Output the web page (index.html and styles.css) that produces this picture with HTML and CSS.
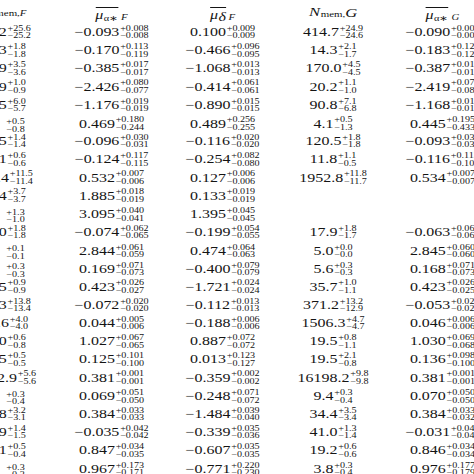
FILE: index.html
```html
<!DOCTYPE html>
<html>
<head>
<meta charset="utf-8">
<link rel="stylesheet" href="styles.css">
</head>
<body>
<div class="page">
<div class="tbl">
  <div class="row head">
    <div class="cell c1"><span class="hsub">mem,<i>F</i></span></div>
    <div class="cell"><span class="hm"><span class="ov"><i>μ</i><span class="hs">α∗</span></span><span class="hs2"><i>F</i></span></span></div>
    <div class="cell"><span class="hm"><span class="ov"><i>μ</i><span class="hs"><i>δ</i></span></span><span class="hs2"><i>F</i></span></span></div>
    <div class="cell"><span class="hn"><i>N</i><span class="hs3">mem,<i>G</i></span></span></div>
    <div class="cell"><span class="hm"><span class="ov"><i>μ</i><span class="hs">α∗</span></span><span class="hs2"><i>G</i></span></span></div>
  </div>

  <div class="row">
    <div class="cell c1"><span class="v">2<span class="e"><span>+25.6</span><span>−25.2</span></span></span></div>
    <div class="cell"><span class="v">−0.093<span class="e"><span>+0.008</span><span>−0.008</span></span></span></div>
    <div class="cell"><span class="v">0.100<span class="e"><span>+0.009</span><span>−0.009</span></span></span></div>
    <div class="cell"><span class="v">414.7<span class="e"><span>+24.9</span><span>−24.6</span></span></span></div>
    <div class="cell"><span class="v">−0.090<span class="e"><span>+0.009</span><span>−0.009</span></span></span></div>
  </div>
  <div class="row">
    <div class="cell c1"><span class="v">3<span class="e"><span>+1.8</span><span>−1.8</span></span></span></div>
    <div class="cell"><span class="v">−0.170<span class="e"><span>+0.113</span><span>−0.119</span></span></span></div>
    <div class="cell"><span class="v">−0.466<span class="e"><span>+0.096</span><span>−0.095</span></span></span></div>
    <div class="cell"><span class="v">14.3<span class="e"><span>+2.1</span><span>−1.7</span></span></span></div>
    <div class="cell"><span class="v">−0.183<span class="e"><span>+0.121</span><span>−0.122</span></span></span></div>
  </div>
  <div class="row">
    <div class="cell c1"><span class="v">9<span class="e"><span>+3.5</span><span>−3.6</span></span></span></div>
    <div class="cell"><span class="v">−0.385<span class="e"><span>+0.017</span><span>−0.017</span></span></span></div>
    <div class="cell"><span class="v">−1.068<span class="e"><span>+0.013</span><span>−0.013</span></span></span></div>
    <div class="cell"><span class="v">170.0<span class="e"><span>+4.5</span><span>−4.5</span></span></span></div>
    <div class="cell"><span class="v">−0.387<span class="e"><span>+0.017</span><span>−0.016</span></span></span></div>
  </div>
  <div class="row">
    <div class="cell c1"><span class="v">9<span class="e"><span>+1.0</span><span>−0.9</span></span></span></div>
    <div class="cell"><span class="v">−2.426<span class="e"><span>+0.080</span><span>−0.077</span></span></span></div>
    <div class="cell"><span class="v">−0.414<span class="e"><span>+0.061</span><span>−0.061</span></span></span></div>
    <div class="cell"><span class="v">20.2<span class="e"><span>+1.1</span><span>−1.0</span></span></span></div>
    <div class="cell"><span class="v">−2.419<span class="e"><span>+0.078</span><span>−0.080</span></span></span></div>
  </div>
  <div class="row">
    <div class="cell c1"><span class="v">5<span class="e"><span>+6.0</span><span>−5.7</span></span></span></div>
    <div class="cell"><span class="v">−1.176<span class="e"><span>+0.019</span><span>−0.019</span></span></span></div>
    <div class="cell"><span class="v">−0.890<span class="e"><span>+0.015</span><span>−0.015</span></span></span></div>
    <div class="cell"><span class="v">90.8<span class="e"><span>+7.1</span><span>−6.8</span></span></span></div>
    <div class="cell"><span class="v">−1.168<span class="e"><span>+0.018</span><span>−0.018</span></span></span></div>
  </div>
  <div class="row">
    <div class="cell c1"><span class="v nb"><span class="e"><span>+0.5</span><span>−0.8</span></span></span></div>
    <div class="cell"><span class="v">0.469<span class="e"><span>+0.180</span><span>−0.244</span></span></span></div>
    <div class="cell"><span class="v">0.489<span class="e"><span>+0.256</span><span>−0.255</span></span></span></div>
    <div class="cell"><span class="v">4.1<span class="e"><span>+0.5</span><span>−1.3</span></span></span></div>
    <div class="cell"><span class="v">0.445<span class="e"><span>+0.195</span><span>−0.433</span></span></span></div>
  </div>
  <div class="row">
    <div class="cell c1"><span class="v">5<span class="e"><span>+1.4</span><span>−1.4</span></span></span></div>
    <div class="cell"><span class="v">−0.096<span class="e"><span>+0.030</span><span>−0.031</span></span></span></div>
    <div class="cell"><span class="v">−0.116<span class="e"><span>+0.020</span><span>−0.020</span></span></span></div>
    <div class="cell"><span class="v">120.5<span class="e"><span>+1.8</span><span>−1.8</span></span></span></div>
    <div class="cell"><span class="v">−0.093<span class="e"><span>+0.030</span><span>−0.030</span></span></span></div>
  </div>
  <div class="row">
    <div class="cell c1"><span class="v">1<span class="e"><span>+0.6</span><span>−0.6</span></span></span></div>
    <div class="cell"><span class="v">−0.124<span class="e"><span>+0.117</span><span>−0.115</span></span></span></div>
    <div class="cell"><span class="v">−0.254<span class="e"><span>+0.082</span><span>−0.080</span></span></span></div>
    <div class="cell"><span class="v">11.8<span class="e"><span>+1.1</span><span>−0.5</span></span></span></div>
    <div class="cell"><span class="v">−0.116<span class="e"><span>+0.113</span><span>−0.109</span></span></span></div>
  </div>
  <div class="row">
    <div class="cell c1"><span class="v dot">.4<span class="e"><span>+11.5</span><span>−11.4</span></span></span></div>
    <div class="cell"><span class="v">0.532<span class="e"><span>+0.007</span><span>−0.006</span></span></span></div>
    <div class="cell"><span class="v">0.127<span class="e"><span>+0.006</span><span>−0.006</span></span></span></div>
    <div class="cell"><span class="v">1952.8<span class="e"><span>+11.8</span><span>−11.7</span></span></span></div>
    <div class="cell"><span class="v">0.534<span class="e"><span>+0.007</span><span>−0.007</span></span></span></div>
  </div>
  <div class="row">
    <div class="cell c1"><span class="v">4<span class="e"><span>+3.7</span><span>−3.7</span></span></span></div>
    <div class="cell"><span class="v">1.885<span class="e"><span>+0.018</span><span>−0.019</span></span></span></div>
    <div class="cell"><span class="v">0.133<span class="e"><span>+0.019</span><span>−0.019</span></span></span></div>
    <div class="cell"></div>
    <div class="cell"></div>
  </div>
  <div class="row">
    <div class="cell c1"><span class="v nb"><span class="e"><span>+1.3</span><span>−1.0</span></span></span></div>
    <div class="cell"><span class="v">3.095<span class="e"><span>+0.040</span><span>−0.041</span></span></span></div>
    <div class="cell"><span class="v">1.395<span class="e"><span>+0.045</span><span>−0.045</span></span></span></div>
    <div class="cell"></div>
    <div class="cell"></div>
  </div>
  <div class="row">
    <div class="cell c1"><span class="v">0<span class="e"><span>+1.8</span><span>−1.8</span></span></span></div>
    <div class="cell"><span class="v">−0.074<span class="e"><span>+0.062</span><span>−0.065</span></span></span></div>
    <div class="cell"><span class="v">−0.199<span class="e"><span>+0.054</span><span>−0.055</span></span></span></div>
    <div class="cell"><span class="v">17.9<span class="e"><span>+1.8</span><span>−1.7</span></span></span></div>
    <div class="cell"><span class="v">−0.063<span class="e"><span>+0.063</span><span>−0.065</span></span></span></div>
  </div>
  <div class="row">
    <div class="cell c1"><span class="v nb"><span class="e"><span>+0.1</span><span>−0.1</span></span></span></div>
    <div class="cell"><span class="v">2.844<span class="e"><span>+0.061</span><span>−0.059</span></span></span></div>
    <div class="cell"><span class="v">0.474<span class="e"><span>+0.064</span><span>−0.063</span></span></span></div>
    <div class="cell"><span class="v">5.0<span class="e"><span>+0.0</span><span>−0.0</span></span></span></div>
    <div class="cell"><span class="v">2.845<span class="e"><span>+0.060</span><span>−0.060</span></span></span></div>
  </div>
  <div class="row">
    <div class="cell c1"><span class="v nb"><span class="e"><span>+0.3</span><span>−0.3</span></span></span></div>
    <div class="cell"><span class="v">0.169<span class="e"><span>+0.071</span><span>−0.073</span></span></span></div>
    <div class="cell"><span class="v">−0.400<span class="e"><span>+0.079</span><span>−0.079</span></span></span></div>
    <div class="cell"><span class="v">5.6<span class="e"><span>+0.3</span><span>−0.3</span></span></span></div>
    <div class="cell"><span class="v">0.168<span class="e"><span>+0.071</span><span>−0.073</span></span></span></div>
  </div>
  <div class="row">
    <div class="cell c1"><span class="v">5<span class="e"><span>+0.9</span><span>−0.9</span></span></span></div>
    <div class="cell"><span class="v">0.423<span class="e"><span>+0.026</span><span>−0.027</span></span></span></div>
    <div class="cell"><span class="v">−1.721<span class="e"><span>+0.024</span><span>−0.024</span></span></span></div>
    <div class="cell"><span class="v">35.7<span class="e"><span>+1.0</span><span>−1.1</span></span></span></div>
    <div class="cell"><span class="v">0.423<span class="e"><span>+0.026</span><span>−0.025</span></span></span></div>
  </div>
  <div class="row">
    <div class="cell c1"><span class="v">3<span class="e"><span>+13.8</span><span>−13.4</span></span></span></div>
    <div class="cell"><span class="v">−0.072<span class="e"><span>+0.020</span><span>−0.020</span></span></span></div>
    <div class="cell"><span class="v">−0.112<span class="e"><span>+0.013</span><span>−0.013</span></span></span></div>
    <div class="cell"><span class="v">371.2<span class="e"><span>+13.2</span><span>−12.9</span></span></span></div>
    <div class="cell"><span class="v">−0.053<span class="e"><span>+0.020</span><span>−0.021</span></span></span></div>
  </div>
  <div class="row">
    <div class="cell c1"><span class="v dot">.6<span class="e"><span>+4.0</span><span>−4.0</span></span></span></div>
    <div class="cell"><span class="v">0.044<span class="e"><span>+0.005</span><span>−0.006</span></span></span></div>
    <div class="cell"><span class="v">−0.188<span class="e"><span>+0.006</span><span>−0.006</span></span></span></div>
    <div class="cell"><span class="v">1506.3<span class="e"><span>+4.7</span><span>−4.7</span></span></span></div>
    <div class="cell"><span class="v">0.046<span class="e"><span>+0.006</span><span>−0.006</span></span></span></div>
  </div>
  <div class="row">
    <div class="cell c1"><span class="v">0<span class="e"><span>+0.6</span><span>−0.8</span></span></span></div>
    <div class="cell"><span class="v">1.027<span class="e"><span>+0.067</span><span>−0.065</span></span></span></div>
    <div class="cell"><span class="v">0.887<span class="e"><span>+0.072</span><span>−0.072</span></span></span></div>
    <div class="cell"><span class="v">19.5<span class="e"><span>+0.8</span><span>−1.1</span></span></span></div>
    <div class="cell"><span class="v">1.030<span class="e"><span>+0.069</span><span>−0.068</span></span></span></div>
  </div>
  <div class="row">
    <div class="cell c1"><span class="v">5<span class="e"><span>+0.5</span><span>−0.5</span></span></span></div>
    <div class="cell"><span class="v">0.125<span class="e"><span>+0.101</span><span>−0.100</span></span></span></div>
    <div class="cell"><span class="v">0.013<span class="e"><span>+0.123</span><span>−0.127</span></span></span></div>
    <div class="cell"><span class="v">19.5<span class="e"><span>+2.1</span><span>−0.8</span></span></span></div>
    <div class="cell"><span class="v">0.136<span class="e"><span>+0.098</span><span>−0.100</span></span></span></div>
  </div>
  <div class="row">
    <div class="cell c1"><span class="v dot">2.9<span class="e"><span>+5.6</span><span>−5.6</span></span></span></div>
    <div class="cell"><span class="v">0.381<span class="e"><span>+0.001</span><span>−0.001</span></span></span></div>
    <div class="cell"><span class="v">−0.359<span class="e"><span>+0.002</span><span>−0.002</span></span></span></div>
    <div class="cell"><span class="v">16198.2<span class="e"><span>+9.8</span><span>−9.8</span></span></span></div>
    <div class="cell"><span class="v">0.381<span class="e"><span>+0.001</span><span>−0.001</span></span></span></div>
  </div>
  <div class="row">
    <div class="cell c1"><span class="v nb"><span class="e"><span>+0.3</span><span>−0.4</span></span></span></div>
    <div class="cell"><span class="v">0.069<span class="e"><span>+0.051</span><span>−0.050</span></span></span></div>
    <div class="cell"><span class="v">−0.248<span class="e"><span>+0.071</span><span>−0.072</span></span></span></div>
    <div class="cell"><span class="v">9.4<span class="e"><span>+0.3</span><span>−0.4</span></span></span></div>
    <div class="cell"><span class="v">0.070<span class="e"><span>+0.050</span><span>−0.050</span></span></span></div>
  </div>
  <div class="row">
    <div class="cell c1"><span class="v">8<span class="e"><span>+3.2</span><span>−3.1</span></span></span></div>
    <div class="cell"><span class="v">0.384<span class="e"><span>+0.033</span><span>−0.033</span></span></span></div>
    <div class="cell"><span class="v">−1.484<span class="e"><span>+0.039</span><span>−0.040</span></span></span></div>
    <div class="cell"><span class="v">34.4<span class="e"><span>+3.5</span><span>−3.4</span></span></span></div>
    <div class="cell"><span class="v">0.384<span class="e"><span>+0.033</span><span>−0.032</span></span></span></div>
  </div>
  <div class="row">
    <div class="cell c1"><span class="v">9<span class="e"><span>+1.4</span><span>−1.5</span></span></span></div>
    <div class="cell"><span class="v">−0.035<span class="e"><span>+0.042</span><span>−0.042</span></span></span></div>
    <div class="cell"><span class="v">−0.339<span class="e"><span>+0.035</span><span>−0.036</span></span></span></div>
    <div class="cell"><span class="v">41.0<span class="e"><span>+1.3</span><span>−1.4</span></span></span></div>
    <div class="cell"><span class="v">−0.031<span class="e"><span>+0.040</span><span>−0.041</span></span></span></div>
  </div>
  <div class="row">
    <div class="cell c1"><span class="v">1<span class="e"><span>+0.5</span><span>−0.4</span></span></span></div>
    <div class="cell"><span class="v">0.847<span class="e"><span>+0.034</span><span>−0.035</span></span></span></div>
    <div class="cell"><span class="v">−0.607<span class="e"><span>+0.035</span><span>−0.035</span></span></span></div>
    <div class="cell"><span class="v">19.2<span class="e"><span>+0.6</span><span>−0.6</span></span></span></div>
    <div class="cell"><span class="v">0.846<span class="e"><span>+0.034</span><span>−0.034</span></span></span></div>
  </div>
  <div class="row">
    <div class="cell c1"><span class="v nb"><span class="e"><span>+0.3</span><span>−0.3</span></span></span></div>
    <div class="cell"><span class="v">0.967<span class="e"><span>+0.173</span><span>−0.171</span></span></span></div>
    <div class="cell"><span class="v">−0.771<span class="e"><span>+0.220</span><span>−0.230</span></span></span></div>
    <div class="cell"><span class="v">3.8<span class="e"><span>+0.3</span><span>−0.4</span></span></span></div>
    <div class="cell"><span class="v">0.976<span class="e"><span>+0.177</span><span>−0.179</span></span></span></div>
  </div>
</div>
</div>
</body>
</html>
```

FILE: styles.css
```css
html, body {
  margin: 0;
  padding: 0;
  background: #ffffff;
}
.page {
  width: 474px;
  height: 474px;
  overflow: hidden;
  padding-top: 0.5px;
  box-sizing: border-box;
  font-family: "Liberation Serif", "Times New Roman", serif;
  color: #141414;
}
.tbl {
  width: 360px;
  transform: scaleX(1.33);
  transform-origin: 0 0;
}
.row {
  display: grid;
  grid-template-columns: 42.1px 83.5px 83.5px 82.7px 81.8px;
  height: 18.2px;
  align-items: center;
}
.row.head {
  height: 22.5px;
}
.cell {
  text-align: center;
  white-space: nowrap;
  font-size: 12px;
  line-height: 1;
}
.cell.c1 {
  text-align: left;
}
.v {
  display: inline-flex;
  align-items: center;
}
.c1 .v {
  margin-left: -1px;
}
.c1 .v.dot {
  margin-left: -2.2px;
}
.c1 .v.nb {
  margin-left: 4.2px;
}
.e {
  display: inline-flex;
  flex-direction: column;
  align-items: flex-start;
  font-size: 7.6px;
  line-height: 7.6px;
  margin-left: 0.6px;
  margin-top: 0.5px;
}
i {
  font-style: italic;
}
.hsub {
  display: inline-block;
  font-size: 8.2px;
  margin-left: -3.5px;
  margin-top: 4px;
}
.hm {
  display: inline-flex;
  align-items: flex-end;
  margin-top: 4px;
}
.ov {
  display: inline-flex;
  align-items: flex-end;
  border-top: 0.7px solid #141414;
  padding-top: 1px;
}
.ov i {
  font-size: 12px;
  line-height: 1;
}
.hs {
  font-size: 7.8px;
  line-height: 1;
  margin-bottom: -2px;
  margin-left: 0.3px;
}
.hs2 {
  font-size: 8.2px;
  line-height: 1;
  margin-bottom: -1.5px;
  margin-left: 2px;
}
.hn {
  display: inline-flex;
  align-items: flex-end;
}
.hn i {
  font-size: 12.5px;
}
.hs3 {
  font-size: 8.2px;
  line-height: 1;
  margin-bottom: -1.5px;
  margin-left: 0.5px;
}
```
